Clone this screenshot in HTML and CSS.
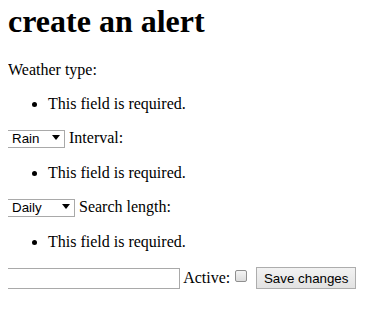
FILE: index.html
```html
<!DOCTYPE html>
<html>
<head>
<meta charset="utf-8">
<title>create an alert</title>
<link rel="stylesheet" href="styles.css">
</head>
<body>
<h1 class="title">create an alert</h1>
<form class="alert-form">
<label class="lbl">Weather type:</label>
<ul class="errorlist"><li>This field is required.</li></ul>
<span class="sel sel-rain"><select class="ctl-select"><option>Rain</option></select></span>
<label class="lbl">Interval:</label>
<ul class="errorlist"><li>This field is required.</li></ul>
<span class="sel sel-daily"><select class="ctl-select"><option>Daily</option></select></span>
<label class="lbl">Search length:</label>
<ul class="errorlist"><li>This field is required.</li></ul>
<input class="ctl-text" type="text">
<label class="lbl">Active:</label>
<input class="ctl-check" type="checkbox">
<button class="ctl-btn" type="submit">Save changes</button>
</form>
</body>
</html>
```

FILE: styles.css
```css
html, body {
  background: #fff;
}
body {
  margin: 3px 8px 8px;
  font-family: "Liberation Serif", "Times New Roman", serif;
  font-size: 16px;
  color: #000;
}
.title {
  font-size: 32px;
  font-weight: bold;
  margin: 0 0 21px;
}
.alert-form {
  margin: 0;
}
.errorlist {
  margin: 16px 0;
  padding-left: 40px;
  list-style: disc;
}
.sel {
  position: relative;
  display: inline-block;
  vertical-align: baseline;
  margin-left: -1px;
}
.sel::after {
  content: "";
  position: absolute;
  top: 6px;
  right: 5px;
  border-left: 4px solid transparent;
  border-right: 4px solid transparent;
  border-top: 5px solid #000;
  pointer-events: none;
}
.ctl-select {
  -webkit-appearance: none;
  appearance: none;
  font-family: "Liberation Sans", Arial, sans-serif;
  font-size: 13.33px;
  color: #000;
  background: #fff;
  border: 1px solid #a9a9a9;
  border-radius: 0;
  height: 18px;
  padding: 0 0 0 4px;
  margin: 0;
  line-height: 16px;
  box-sizing: border-box;
}
.sel-rain .ctl-select { width: 58px; }
.sel-daily .ctl-select { width: 68px; }
.ctl-text {
  font-family: "Liberation Sans", Arial, sans-serif;
  font-size: 13.33px;
  width: 173px;
  height: 21px;
  box-sizing: border-box;
  border: 1px solid #a9a9a9;
  border-radius: 0;
  padding: 1px 2px;
  margin: 0 0 0 -1px;
}
.ctl-check {
  width: 12px;
  height: 12px;
  margin: 0 5px 0 1px;
  vertical-align: 1px;
  -webkit-appearance: none;
  appearance: none;
  border: 1px solid #8f8f8f;
  border-radius: 2px;
  background: linear-gradient(#f4f4f4, #dcdcdc);
  box-sizing: border-box;
}
.ctl-btn {
  font-family: "Liberation Sans", Arial, sans-serif;
  font-size: 13.33px;
  color: #000;
  width: 100px;
  height: 22px;
  box-sizing: border-box;
  border: 1px solid #adadad;
  border-radius: 0;
  background: linear-gradient(#f2f2f2, #e2e2e2);
  padding: 0;
  margin: 0;
}
```
